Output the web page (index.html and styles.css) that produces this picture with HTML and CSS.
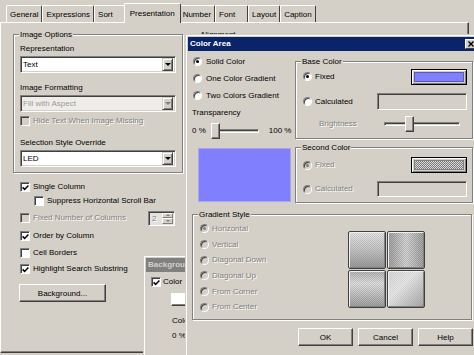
FILE: index.html
```html
<!DOCTYPE html>
<html lang="en">
<head>
    <meta charset="UTF-8">
    <meta name="viewport" content="width=device-width, initial-scale=1.0">
    <title>Chart Properties - Presentation</title>
    <link rel="stylesheet" href="styles.css">
</head>
<body>
<div class="screen">

<!-- Properties page (tab Presentation) -->
<div class="props">
    <div class="tabs">
        <span class="tab">General</span>
        <span class="tab">Expressions</span>
        <span class="tab tab-wide">Sort</span>
        <span class="tab tab-active">Presentation</span>
        <span class="tab">Number</span>
        <span class="tab tab-wide">Font</span>
        <span class="tab">Layout</span>
        <span class="tab">Caption</span>
    </div>

    <div class="page">
        <div class="col-left">
            <div class="group image-options">
                <span class="group-title">Image Options</span>
                <div class="field-label first">Representation</div>
                <div class="select"><span>Text</span><i class="drop"></i></div>
                <div class="field-label">Image Formatting</div>
                <div class="select disabled"><span>Fill with Aspect</span><i class="drop"></i></div>
                <div class="check-row hide-text"><i class="check disabled"></i><span class="dis">Hide Text When Image Missing</span></div>
                <div class="field-label override">Selection Style Override</div>
                <div class="select"><span>LED</span><i class="drop"></i></div>
            </div>

            <div class="checks">
                <div class="check-row row-14"><i class="check"><svg width="7" height="7" viewBox="0 0 7 7"><path d="M0.6 3.4 L2.6 5.4 L6.4 1.4" fill="none" stroke="#000" stroke-width="1.5"/></svg></i><span>Single Column</span></div>
                <div class="check-row row-14 indent"><i class="check"></i><span>Suppress Horizontal Scroll Bar</span></div>
                <div class="check-row row-20">
                    <i class="check disabled"></i><span class="dis">Fixed Number of Columns</span>
                    <div class="spin"><span class="dis">2</span><div class="spin-btns"><i class="spin-up"></i><i class="spin-down"></i></div></div>
                </div>
                <div class="check-row row-16"><i class="check"><svg width="7" height="7" viewBox="0 0 7 7"><path d="M0.6 3.4 L2.6 5.4 L6.4 1.4" fill="none" stroke="#000" stroke-width="1.5"/></svg></i><span>Order by Column</span></div>
                <div class="check-row row-17"><i class="check"></i><span>Cell Borders</span></div>
                <div class="check-row row-16"><i class="check"><svg width="7" height="7" viewBox="0 0 7 7"><path d="M0.6 3.4 L2.6 5.4 L6.4 1.4" fill="none" stroke="#000" stroke-width="1.5"/></svg></i><span>Highlight Search Substring</span></div>
                <button type="button" class="btn btn-background">Background...</button>
            </div>
        </div>

        <div class="col-right">
            <div class="group alignment">
                <span class="group-title">Alignment</span>
            </div>
        </div>
    </div>
</div>

<!-- Background dialog (inactive, behind) -->
<div class="win win-bg">
    <div class="titlebar inactive"><span>Background</span></div>
    <div class="bg-body">
        <div class="check-row bg-color"><i class="check"><svg width="7" height="7" viewBox="0 0 7 7"><path d="M0.6 3.4 L2.6 5.4 L6.4 1.4" fill="none" stroke="#000" stroke-width="1.5"/></svg></i><span>Color</span></div>
        <div class="bg-swatch"></div>
        <div class="bg-line first">Color</div>
        <div class="bg-line">0 %</div>
    </div>
</div>

<!-- Color Area dialog -->
<div class="win win-color">
    <div class="titlebar">
        <span>Color Area</span>
        <span class="close"><svg width="6" height="6" viewBox="0 0 6 6"><path d="M0.5 0.5 L5.5 5.5 M5.5 0.5 L0.5 5.5" stroke="#000" stroke-width="1.4"/></svg></span>
    </div>
    <div class="dlg">
        <div class="dlg-top">
            <div class="fill-type">
                <div class="opt"><i class="radio on"></i><span>Solid Color</span></div>
                <div class="opt"><i class="radio"></i><span>One Color Gradient</span></div>
                <div class="opt"><i class="radio"></i><span>Two Colors Gradient</span></div>
                <div class="transp-label">Transparency</div>
                <div class="slider-row">
                    <span>0 %</span>
                    <div class="slider transp"><i class="track"></i><i class="thumb"></i></div>
                    <span>100 %</span>
                </div>
            </div>

            <div class="group base-color">
                <span class="group-title">Base Color</span>
                <div class="color-row first">
                    <div class="opt-inline"><i class="radio on"></i><span>Fixed</span></div>
                    <div class="swatch"><i class="swatch-fill"></i></div>
                </div>
                <div class="color-row second">
                    <div class="opt-inline"><i class="radio"></i><span>Calculated</span></div>
                    <div class="calc-box"></div>
                </div>
                <div class="color-row bright">
                    <span class="dis">Brightness</span>
                    <div class="slider brightness"><i class="track"></i><i class="thumb"></i></div>
                </div>
            </div>

            <div class="preview"></div>

            <div class="group second-color">
                <span class="group-title">Second Color</span>
                <div class="color-row first">
                    <div class="opt-inline"><i class="radio on disabled"></i><span class="dis">Fixed</span></div>
                    <div class="swatch"><i class="swatch-fill hatched"></i></div>
                </div>
                <div class="color-row second">
                    <div class="opt-inline"><i class="radio disabled"></i><span class="dis">Calculated</span></div>
                    <div class="calc-box"></div>
                </div>
            </div>
        </div>

        <div class="group gradient-style">
            <span class="group-title">Gradient Style</span>
            <div class="gradient-body">
                <div class="grad-opts">
                    <div class="grad-opt"><i class="radio on disabled"></i><span class="dis">Horizontal</span></div>
                    <div class="grad-opt"><i class="radio disabled"></i><span class="dis">Vertical</span></div>
                    <div class="grad-opt"><i class="radio disabled"></i><span class="dis">Diagonal Down</span></div>
                    <div class="grad-opt"><i class="radio disabled"></i><span class="dis">Diagonal Up</span></div>
                    <div class="grad-opt"><i class="radio disabled"></i><span class="dis">From Corner</span></div>
                    <div class="grad-opt"><i class="radio disabled"></i><span class="dis">From Center</span></div>
                </div>
                <div class="tiles">
                    <i class="tile t1"></i>
                    <i class="tile t2"></i>
                    <i class="tile t3"></i>
                    <i class="tile t4"></i>
                </div>
            </div>
        </div>

        <div class="actions">
            <button type="button" class="btn">OK</button>
            <button type="button" class="btn">Cancel</button>
            <button type="button" class="btn">Help</button>
        </div>
    </div>
</div>

</div>
</body>
</html>
```

FILE: styles.css
```css
* {
    box-sizing: border-box;
}

html,
body {
    background-color: #d4d0c8;
}

body {
    margin: 0;
    font-family: "Liberation Sans", Arial, sans-serif;
    font-size: 8px;
    line-height: 12px;
    color: #000;
}

/* the captured area: windows hang over its right and bottom edges */
.screen {
    position: relative;
    width: 474px;
    height: 355px;
    overflow: hidden;
}

i {
    display: block;
}

.dis {
    color: #808080;
    text-shadow: 1px 1px 0 #fff;
}

/* ---------- tabs ---------- */

.props {
    width: 469px;
}

.tabs {
    display: flex;
    align-items: flex-end;
    height: 22px;
    padding-left: 6px;
}

.tab {
    height: 17px;
    padding: 2px 3px 0;
    line-height: 13px;
    border-top: 1px solid #fff;
    border-left: 1px solid #fff;
    border-right: 1px solid #404040;
    border-radius: 2px 2px 0 0;
    white-space: nowrap;
}

.tab-wide {
    padding-right: 12px;
}

.tab-active {
    position: relative;
    z-index: 1;
    height: 20px;
    margin: 0 -2px -1px;
    padding: 3px 5px 0;
    background-color: #d4d0c8;
}

.page {
    display: flex;
    gap: 8px;
    height: 331px;
    padding: 11px 0 0 12px;
    border: 1px solid;
    border-color: #fff #404040 #404040 #fff;
    box-shadow: inset -1px -1px 0 #808080;
}

/* ---------- group boxes ---------- */

.group {
    border: 1px solid #808080;
    box-shadow: inset 1px 1px 0 #fff, 1px 1px 0 #fff;
}

.group-title {
    display: table;
    margin-top: -6px;
    padding: 0 1px;
    line-height: 11px;
    background-color: #d4d0c8;
    white-space: nowrap;
}

/* ---------- left column ---------- */

.col-left {
    width: 170px;
    display: flex;
    flex-direction: column;
}

.image-options {
    padding: 0 6px 5px;
}

.image-options .group-title {
    margin-left: -1px;
}

.field-label {
    margin-top: 9px;
    margin-bottom: 1px;
}

.field-label.first {
    margin-top: 3px;
}

.field-label.override {
    margin-top: 10px;
}

.select {
    display: flex;
    align-items: center;
    height: 17px;
    padding: 2px;
    background-color: #fff;
    border: 1px solid;
    border-color: #808080 #fff #fff #808080;
    box-shadow: inset 1px 1px 0 #404040, inset -1px -1px 0 #d4d0c8;
}

.select span {
    flex: 1;
}

.select.disabled {
    background-color: #eeedea;
}

.select.disabled span {
    color: #9a9a9a;
}

.drop {
    width: 11px;
    height: 13px;
    display: flex;
    align-items: center;
    justify-content: center;
    background-color: #d4d0c8;
    border: 1px solid;
    border-color: #d4d0c8 #404040 #404040 #d4d0c8;
    box-shadow: inset 1px 1px 0 #fff, inset -1px -1px 0 #808080;
}

.drop::after {
    content: "";
    border-left: 3px solid transparent;
    border-right: 3px solid transparent;
    border-top: 3px solid #000;
}

.select.disabled .drop::after {
    border-top-color: #808080;
}

.check-row {
    display: flex;
    align-items: center;
    gap: 3px;
    white-space: nowrap;
}

.hide-text {
    height: 12px;
    margin-top: 3px;
}

.check {
    flex: none;
    width: 10px;
    height: 10px;
    display: flex;
    align-items: center;
    justify-content: center;
    background-color: #fff;
    border: 1px solid;
    border-color: #808080 #fff #fff #808080;
    box-shadow: inset 1px 1px 0 #404040;
}

.check.disabled {
    background-color: #d4d0c8;
}

.checks {
    display: flex;
    flex-direction: column;
    margin-top: 7px;
    padding: 0 8px 0 7px;
}

.row-14 { height: 14px; }
.row-16 { height: 16px; }
.row-17 { height: 17px; }
.row-20 { height: 20px; }

.indent {
    padding-left: 14px;
}

.spin {
    display: flex;
    width: 27px;
    height: 15px;
    margin-left: auto;
    padding: 1px 1px 1px 3px;
    background-color: #e4e2de;
    border: 1px solid;
    border-color: #808080 #fff #fff #808080;
    box-shadow: inset 1px 1px 0 #404040;
}

.spin span {
    flex: 1;
    line-height: 11px;
}

.spin-btns {
    width: 11px;
    display: flex;
    flex-direction: column;
}

.spin-up,
.spin-down {
    flex: 1;
    display: flex;
    align-items: center;
    justify-content: center;
    background-color: #d4d0c8;
    border: 1px solid;
    border-color: #fff #808080 #808080 #fff;
}

.spin-up::after {
    content: "";
    border-left: 2px solid transparent;
    border-right: 2px solid transparent;
    border-bottom: 2px solid #808080;
}

.spin-down::after {
    content: "";
    border-left: 2px solid transparent;
    border-right: 2px solid transparent;
    border-top: 2px solid #808080;
}

.btn {
    height: 18px;
    padding: 0;
    font-family: inherit;
    font-size: 8px;
    color: #000;
    background-color: #d4d0c8;
    border: 1px solid;
    border-color: #fff #404040 #404040 #fff;
    box-shadow: inset -1px -1px 0 #808080;
}

.btn-background {
    width: 87px;
    margin: 7px 0 0 -1px;
}

/* ---------- right column (behind dialogs) ---------- */

.col-right {
    width: 190px;
}

.alignment {
    height: 160px;
    padding-left: 7px;
}

/* ---------- windows ---------- */

.win {
    position: absolute;
    padding: 2px;
    background-color: #d4d0c8;
    border: 1px solid;
    border-color: #d4d0c8 #404040 #404040 #d4d0c8;
    box-shadow: inset 1px 1px 0 #fff, inset -1px -1px 0 #808080;
}

.titlebar {
    display: flex;
    align-items: center;
    justify-content: space-between;
    height: 14px;
    padding-left: 2px;
    background-color: #0a246a;
    color: #fff;
    font-weight: bold;
    white-space: nowrap;
}

.titlebar.inactive {
    background-color: #808080;
    color: #d4d0c8;
}

.close {
    display: flex;
    align-items: center;
    justify-content: center;
    width: 12px;
    height: 10px;
    margin-right: 2px;
    background-color: #d4d0c8;
    border: 1px solid;
    border-color: #fff #404040 #404040 #fff;
}

/* Background dialog */

.win-bg {
    left: 143px;
    top: 255px;
    width: 110px;
    height: 120px;
}

.bg-body {
    padding: 4px 0 0 5px;
}

.bg-color {
    height: 12px;
    gap: 2px;
}

.bg-swatch {
    width: 40px;
    height: 13px;
    margin: 5px 0 0 20px;
    background-color: #fff;
    border: 1px solid;
    border-color: #fff #404040 #404040 #fff;
    box-shadow: inset -1px -1px 0 #808080;
}

.bg-line {
    margin: 3px 0 0 21px;
}

.bg-line.first {
    margin-top: 9px;
}

/* Color Area dialog */

.win-color {
    left: 185px;
    top: 34px;
    width: 297px;
    height: 330px;
}

.dlg {
    padding: 2px 6px 0 4px;
}

.dlg-top {
    display: grid;
    grid-template-columns: 103px 178px;
    align-items: start;
}

.opt {
    display: flex;
    align-items: center;
    gap: 4px;
    height: 17px;
    padding-left: 1px;
    white-space: nowrap;
}

.radio {
    position: relative;
    flex: none;
    width: 9px;
    height: 9px;
    border-radius: 50%;
    background-color: #fff;
    border: 1px solid;
    border-color: #808080 #fff #fff #808080;
    box-shadow: inset 1px 1px 0 #404040;
}

.radio.disabled {
    background-color: #d4d0c8;
}

.radio.on::after {
    content: "";
    position: absolute;
    left: 2px;
    top: 2px;
    width: 3px;
    height: 3px;
    border-radius: 50%;
    background-color: #000;
}

.radio.on.disabled::after {
    background-color: #808080;
}

.transp-label {
    height: 18px;
    line-height: 18px;
}

.slider-row {
    display: flex;
    align-items: center;
    height: 18px;
    white-space: nowrap;
}

.slider {
    position: relative;
    height: 16px;
}

.slider .track {
    position: absolute;
    left: 0;
    right: 0;
    top: 6px;
    height: 4px;
    border: 1px solid;
    border-color: #808080 #fff #fff #808080;
    box-shadow: inset 1px 1px 0 #404040;
}

.slider .thumb {
    position: absolute;
    top: 0;
    width: 9px;
    height: 16px;
    background-color: #d4d0c8;
    border: 1px solid;
    border-color: #fff #404040 #404040 #fff;
    box-shadow: inset -1px -1px 0 #808080;
}

.transp {
    width: 47px;
    margin: 0 10px 0 6px;
}

.transp .thumb {
    left: -1px;
}

.brightness {
    width: 76px;
    margin-right: 7px;
}

.brightness .thumb {
    left: 21px;
}

.base-color,
.second-color {
    padding: 0 5px 5px 7px;
}

.base-color {
    margin-top: 8px;
    padding-bottom: 6px;
}

.base-color .group-title,
.second-color .group-title,
.gradient-style .group-title {
    margin-left: -2px;
}

.color-row {
    display: flex;
    align-items: center;
    justify-content: space-between;
    height: 17px;
    margin-top: 8px;
}

.color-row.first {
    margin-top: 1px;
}

.second-color .color-row {
    height: 16px;
}

.second-color .color-row.first {
    margin-top: 4px;
}

.color-row.bright {
    height: 16px;
    margin-top: 6px;
    padding-left: 16px;
}

.opt-inline {
    display: flex;
    align-items: center;
    gap: 3px;
}

.swatch {
    width: 56px;
    height: 16px;
    padding: 2px;
    background-color: #d4d0c8;
    border: 1px solid #000;
    box-shadow: inset 1px 1px 0 #fff, inset -1px -1px 0 #808080;
}

.swatch-fill {
    height: 100%;
    background-color: #8080ff;
    border: 1px solid #5a5ab0;
}

.swatch-fill.hatched {
    border-color: #808080;
    background: repeating-conic-gradient(#7c7c7c 0 25%, #d8d8d8 0 50%) 0 0 / 2px 2px;
}

.calc-box {
    width: 90px;
    height: 17px;
    border: 1px solid;
    border-color: #808080 #fff #fff #808080;
    box-shadow: inset 1px 1px 0 #404040;
}

.second-color .calc-box {
    height: 16px;
}

.preview {
    width: 93px;
    height: 54px;
    margin: 8px 0 0 6px;
    background-color: #8080ff;
    border: 1px solid #a8a8e8;
}

.second-color {
    margin-top: 7px;
    height: 56px;
}

.gradient-style {
    margin-top: 11px;
    width: 280px;
    padding: 0 6px 4px 7px;
}

.gradient-body {
    display: flex;
}

.grad-opts {
    width: 148px;
    margin-top: 1px;
}

.grad-opt {
    display: flex;
    align-items: center;
    gap: 3px;
    height: 15.7px;
    white-space: nowrap;
}

.tiles {
    display: grid;
    grid-template-columns: 38px 38px;
    grid-auto-rows: 38px;
    gap: 1px;
    margin-top: 11px;
}

.tile {
    border: 1px solid #404040;
    border-radius: 2px;
    box-shadow: inset 1px 1px 0 #f0f0f0, inset -1px -1px 0 #808080;
}

.t1 {
    background:
        repeating-conic-gradient(rgba(0, 0, 0, 0.1) 0 25%, transparent 0 50%) 0 0 / 2px 2px,
        linear-gradient(to bottom, #e4e4e4, #c4c4c4 50%, #9a9a9a);
}

.t2 {
    background:
        repeating-conic-gradient(rgba(0, 0, 0, 0.16) 0 25%, transparent 0 50%) 0 0 / 2px 2px,
        linear-gradient(to right, #a4a4a4, #d8d8d8 50%, #a4a4a4);
}

.t3 {
    background:
        repeating-conic-gradient(rgba(0, 0, 0, 0.12) 0 25%, transparent 0 50%) 0 0 / 2px 2px,
        linear-gradient(to bottom, #b4b4b4, #e0e0e0 35%, #a0a0a0);
}

.t4 {
    background:
        repeating-conic-gradient(rgba(0, 0, 0, 0.08) 0 25%, transparent 0 50%) 0 0 / 2px 2px,
        linear-gradient(135deg, #d8d8d8, #e8e8e8 40%, #a8a8a8);
}

.actions {
    display: flex;
    justify-content: flex-end;
    gap: 5px;
    margin-top: 8px;
}

.actions .btn {
    width: 55px;
}
```
